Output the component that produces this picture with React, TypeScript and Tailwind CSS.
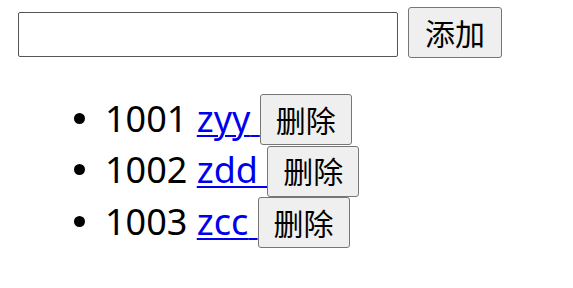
import React, { useState } from "react";

type Person = { id: string; name: string };

const initial: Person[] = [
  { id: "1001", name: "zyy" },
  { id: "1002", name: "zdd" },
  { id: "1003", name: "zcc" },
];

export default function App() {
  const [list, setList] = useState<Person[]>(initial);
  const [text, setText] = useState("");

  const add = () => {
    if (!text.trim()) return;
    const id = String(1001 + list.length);
    setList([...list, { id, name: text.trim() }]);
    setText("");
  };

  return (
    <div className="min-h-screen bg-white px-[18px] pt-[7px] font-['Noto_Sans','Noto_Sans_CJK_SC',sans-serif] text-black">
      <div className="flex items-end gap-[10px]">
        <input
          value={text}
          onChange={(e) => setText(e.target.value)}
          className="mb-[1px] h-[45px] w-[380px] rounded-[2px] border border-[#555] bg-white px-[4px] text-[30px] outline-none"
        />
        <button
          onClick={add}
          className="flex h-[51px] w-[94px] items-center justify-center rounded-[3px] border border-[#767676] bg-[#efefef] font-['Noto_Sans_CJK_SC',sans-serif] text-[30px]"
        >
          添加
        </button>
      </div>

      <ul className="mt-[36px] pl-[56px]">
        {list.map((p) => (
          <li key={p.id} className="flex h-[51.5px] items-baseline text-[36px] leading-none">
            <span className="mr-[20px] inline-block h-[11px] w-[11px] -translate-y-[8px] rounded-full bg-black" />
            <span>{p.id}&nbsp;</span>
            <a href="#" className="text-[#0000ee] underline decoration-[2px] underline-offset-[3px]">
              {p.name}&nbsp;
            </a>
            <button
              onClick={() => setList(list.filter((x) => x.id !== p.id))}
              className="flex h-[51px] w-[92px] items-center justify-center rounded-[3px] border border-[#767676] bg-[#efefef] font-['Noto_Sans_CJK_SC',sans-serif] text-[30px] leading-[1.45]"
            >
              删除
            </button>
          </li>
        ))}
      </ul>
    </div>
  );
}
